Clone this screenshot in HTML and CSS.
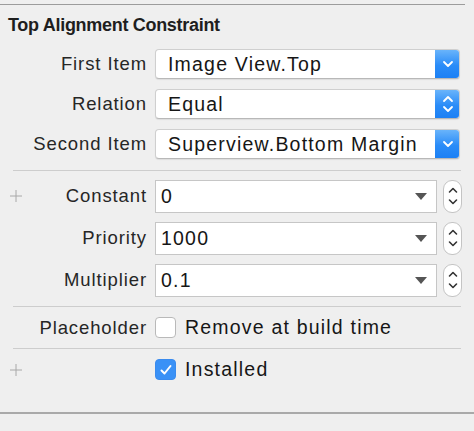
FILE: index.html
```html
<!DOCTYPE html>
<html>
<head>
<meta charset="utf-8">
<link rel="stylesheet" href="styles.css">
</head>
<body>
<div class="screen">
  <div class="panel">
    <div class="title">Top Alignment Constraint</div>
    <div class="group g1">
      <div class="row">
        <div class="label"><span class="ltext">First Item</span></div>
        <div class="popup">
          <span class="val">Image View.Top</span>
          <span class="pbtn"><svg width="12" height="8" viewBox="0 0 12 8"><path d="M2 2 L6 6 L10 2" fill="none" stroke="#fff" stroke-width="1.8" stroke-linecap="round" stroke-linejoin="round"/></svg></span>
        </div>
      </div>
      <div class="row">
        <div class="label"><span class="ltext">Relation</span></div>
        <div class="popup">
          <span class="val">Equal</span>
          <span class="pbtn"><svg width="12" height="20" viewBox="0 0 12 20"><path d="M2 7 L6 3 L10 7 M2 13 L6 17 L10 13" fill="none" stroke="#fff" stroke-width="1.8" stroke-linecap="round" stroke-linejoin="round"/></svg></span>
        </div>
      </div>
      <div class="row">
        <div class="label"><span class="ltext">Second Item</span></div>
        <div class="popup">
          <span class="val">Superview.Bottom Margin</span>
          <span class="pbtn"><svg width="12" height="8" viewBox="0 0 12 8"><path d="M2 2 L6 6 L10 2" fill="none" stroke="#fff" stroke-width="1.8" stroke-linecap="round" stroke-linejoin="round"/></svg></span>
        </div>
      </div>
    </div>
    <div class="sep"></div>
    <div class="group g2">
      <div class="row">
        <div class="label"><svg class="plus" width="12" height="12" viewBox="0 0 12 12"><path d="M6 0 V12 M0 6 H12" stroke="#a8a8a8" stroke-width="1"/></svg><span class="ltext">Constant</span></div>
        <div class="ctrl">
          <div class="combo"><span class="val">0</span><span class="tri"></span></div>
          <div class="stepper"><svg width="12" height="24" viewBox="0 0 12 24"><path d="M2.5 8 L6 4.5 L9.5 8 M2.5 16 L6 19.5 L9.5 16" fill="none" stroke="#333" stroke-width="1.6" stroke-linecap="round" stroke-linejoin="round"/></svg></div>
        </div>
      </div>
      <div class="row">
        <div class="label"><span class="ltext">Priority</span></div>
        <div class="ctrl">
          <div class="combo"><span class="val">1000</span><span class="tri"></span></div>
          <div class="stepper"><svg width="12" height="24" viewBox="0 0 12 24"><path d="M2.5 8 L6 4.5 L9.5 8 M2.5 16 L6 19.5 L9.5 16" fill="none" stroke="#333" stroke-width="1.6" stroke-linecap="round" stroke-linejoin="round"/></svg></div>
        </div>
      </div>
      <div class="row">
        <div class="label"><span class="ltext">Multiplier</span></div>
        <div class="ctrl">
          <div class="combo"><span class="val">0.1</span><span class="tri"></span></div>
          <div class="stepper"><svg width="12" height="24" viewBox="0 0 12 24"><path d="M2.5 8 L6 4.5 L9.5 8 M2.5 16 L6 19.5 L9.5 16" fill="none" stroke="#333" stroke-width="1.6" stroke-linecap="round" stroke-linejoin="round"/></svg></div>
        </div>
      </div>
    </div>
    <div class="sep"></div>
    <div class="row crow">
      <div class="label"><span class="ltext">Placeholder</span></div>
      <div class="checkline"><span class="check"></span><span class="ctext">Remove at build time</span></div>
    </div>
    <div class="sep"></div>
    <div class="row crow">
      <div class="label"><svg class="plus" width="12" height="12" viewBox="0 0 12 12"><path d="M6 0 V12 M0 6 H12" stroke="#a8a8a8" stroke-width="1"/></svg></div>
      <div class="checkline"><span class="check on"><svg width="14" height="12" viewBox="0 0 14 12"><path d="M2.5 6.5 L5.5 9.5 L11.5 2" fill="none" stroke="#fff" stroke-width="2" stroke-linecap="round" stroke-linejoin="round"/></svg></span><span class="ctext">Installed</span></div>
    </div>
  </div>
  <div class="bottomline"></div>
</div>
</body>
</html>
```
FILE: styles.css
```css
html, body {
  margin: 0;
  padding: 0;
  background: #efefef;
}
.screen {
  width: 474px;
  height: 431px;
  background: #efefef;
  font-family: "Liberation Sans", Arial, sans-serif;
  color: #262626;
  overflow: hidden;
  padding-top: 4px;
  box-sizing: border-box;
}
.panel {
  width: 465px;
  border-top: 1px solid #9c9c9c;
  height: 407px;
}
.title {
  font-weight: bold;
  font-size: 18px;
  letter-spacing: -0.3px;
  line-height: 22px;
  padding: 9px 0 8px 8px;
  color: #1e1e1e;
}
.row {
  display: grid;
  grid-template-columns: 146px 1fr;
  column-gap: 9px;
  align-items: center;
}
.g1 .row {
  height: 40px;
}
.g2 .row {
  height: 42px;
}
.label {
  display: flex;
  align-items: center;
  padding-left: 10px;
  font-size: 18.5px;
  letter-spacing: 0.9px;
  color: #262626;
}
.ltext {
  margin-left: auto;
  margin-right: -1px;
}
.plus {
  display: block;
}
.popup {
  height: 30px;
  width: 305px;
  box-sizing: border-box;
  background: #fff;
  border: 1px solid #cfcfcf;
  border-bottom-color: #b8b8b8;
  border-radius: 4px;
  display: flex;
  align-items: center;
  box-shadow: 0 1px 1px rgba(0,0,0,0.08);
  overflow: hidden;
}
.val {
  font-size: 19.5px;
  letter-spacing: 1.2px;
  color: #161616;
}
.popup .val {
  flex: 1;
  padding-left: 12px;
}
.pbtn {
  width: 25px;
  align-self: stretch;
  margin: -1px -1px -1px 0;
  background: linear-gradient(#6db6fb, #2a8cf8 55%, #1b7ff4);
  border-radius: 0 4px 4px 0;
  display: flex;
  align-items: center;
  justify-content: center;
}
.ctrl {
  display: flex;
  align-items: center;
  gap: 6px;
}
.combo {
  width: 282px;
  height: 33px;
  box-sizing: border-box;
  background: #fff;
  border: 1px solid #c6c6c6;
  display: flex;
  align-items: center;
}
.combo .val {
  flex: 1;
  padding-left: 5px;
}
.tri {
  width: 0;
  height: 0;
  border-left: 6px solid transparent;
  border-right: 6px solid transparent;
  border-top: 7px solid #555;
  margin-right: 9px;
}
.stepper {
  width: 19px;
  height: 33px;
  box-sizing: border-box;
  background: #fff;
  border: 1px solid #c4c4c4;
  border-radius: 9px;
  display: flex;
  align-items: center;
  justify-content: center;
}
.sep {
  height: 1px;
  background: #cdcdcd;
  margin: 0 4px 0 13px;
}
.g1 + .sep {
  margin-top: 6px;
}
.g2 {
  padding-top: 4px;
}
.g2 + .sep {
  margin-top: 5px;
}
.crow {
  height: 41px;
}
.checkline {
  display: flex;
  align-items: center;
  gap: 9px;
}
.check {
  width: 21px;
  height: 21px;
  box-sizing: border-box;
  border: 1px solid #b9b9b9;
  border-radius: 4px;
  background: #fff;
  display: flex;
  align-items: center;
  justify-content: center;
}
.check.on {
  background: #3a91f6;
  border-color: #3a8bee;
}
.ctext {
  font-size: 19.5px;
  letter-spacing: 1.2px;
  color: #161616;
}
.bottomline {
  height: 2px;
  background: #a9a9a9;
  margin-top: 0;
}
```
